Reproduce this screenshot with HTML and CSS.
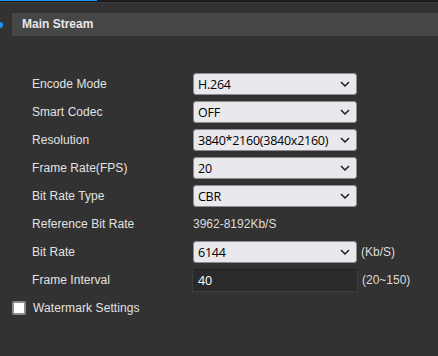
FILE: index.html
```html
<!DOCTYPE html>
<html>
<head>
<meta charset="utf-8">
<link rel="stylesheet" href="styles.css">
</head>
<body>
<div class="topbar"><div class="topbar-active"></div></div>
<div class="head-row">
  <span class="dot"></span>
  <div class="section-head">Main Stream</div>
</div>
<div class="form">
  <div class="row">
    <div class="label">Encode Mode</div>
    <div class="select"><span>H.264</span><svg class="chev" width="10" height="6" viewBox="0 0 10 6"><path d="M1 1 L5 5 L9 1" fill="none" stroke="#222" stroke-width="1.5"/></svg></div>
  </div>
  <div class="row">
    <div class="label">Smart Codec</div>
    <div class="select"><span>OFF</span><svg class="chev" width="10" height="6" viewBox="0 0 10 6"><path d="M1 1 L5 5 L9 1" fill="none" stroke="#222" stroke-width="1.5"/></svg></div>
  </div>
  <div class="row">
    <div class="label">Resolution</div>
    <div class="select"><span>3840*2160(3840x2160)</span><svg class="chev" width="10" height="6" viewBox="0 0 10 6"><path d="M1 1 L5 5 L9 1" fill="none" stroke="#222" stroke-width="1.5"/></svg></div>
  </div>
  <div class="row">
    <div class="label">Frame Rate(FPS)</div>
    <div class="select"><span>20</span><svg class="chev" width="10" height="6" viewBox="0 0 10 6"><path d="M1 1 L5 5 L9 1" fill="none" stroke="#222" stroke-width="1.5"/></svg></div>
  </div>
  <div class="row">
    <div class="label">Bit Rate Type</div>
    <div class="select"><span>CBR</span><svg class="chev" width="10" height="6" viewBox="0 0 10 6"><path d="M1 1 L5 5 L9 1" fill="none" stroke="#222" stroke-width="1.5"/></svg></div>
  </div>
  <div class="row">
    <div class="label">Reference Bit Rate</div>
    <div class="value">3962-8192Kb/S</div>
  </div>
  <div class="row">
    <div class="label">Bit Rate</div>
    <div class="select"><span>6144</span><svg class="chev" width="10" height="6" viewBox="0 0 10 6"><path d="M1 1 L5 5 L9 1" fill="none" stroke="#222" stroke-width="1.5"/></svg></div>
    <div class="unit">(Kb/S)</div>
  </div>
  <div class="row">
    <div class="label">Frame Interval</div>
    <div class="input">40</div>
    <div class="unit">(20~150)</div>
  </div>
  <div class="check-row">
    <span class="checkbox"></span>
    <span class="check-label">Watermark Settings</span>
  </div>
</div>
</body>
</html>
```
FILE: styles.css
```css
html, body {
  margin: 0;
  padding: 0;
}
body {
  width: 438px;
  height: 356px;
  background: #323232;
  font-family: "Liberation Sans", Arial, sans-serif;
  font-size: 12px;
  color: #e2e2e2;
  overflow: hidden;
}
.topbar {
  height: 2px;
  background: #1c1c1c;
  border-bottom: 1px solid #3a3a3a;
}
.topbar-active {
  width: 97px;
  height: 1px;
  background: #1e8fff;
}
.head-row {
  display: flex;
  align-items: center;
  margin-top: 10px;
}
.dot {
  width: 3px;
  height: 6px;
  background: #1e8fff;
  border-radius: 0 3px 3px 0;
  margin-right: 9px;
}
.section-head {
  flex: 1;
  height: 23px;
  line-height: 23px;
  background: #464646;
  padding-left: 10px;
  font-weight: bold;
  color: #e8e8e8;
}
.form {
  margin-top: 34px;
  padding-left: 32px;
}
.row {
  display: flex;
  align-items: center;
  height: 28px;
}
.label {
  width: 161px;
  flex: none;
  letter-spacing: 0.05px;
}
.select {
  box-sizing: border-box;
  width: 164px;
  height: 22px;
  background: #e9e9ed;
  border: 1px solid #8a8a8f;
  border-radius: 3px;
  display: flex;
  align-items: center;
  justify-content: space-between;
  padding: 0 6px 0 4px;
  font-family: "Open Sans", "Noto Sans", sans-serif;
  font-size: 12.5px;
  letter-spacing: -0.25px;
  color: #000;
}
.chev {
  display: block;
}
.value {
  color: #dcdcdc;
}
.unit {
  margin-left: 4px;
  color: #dcdcdc;
}
.input {
  box-sizing: border-box;
  width: 166px;
  height: 23px;
  margin-left: -1px;
  background: #2a2a2a;
  border: 1px solid #3e3e3e;
  border-top-color: #222;
  display: flex;
  align-items: center;
  padding-left: 5px;
  font-family: "Open Sans", "Noto Sans", sans-serif;
  font-size: 12.5px;
  letter-spacing: -0.25px;
  color: #fff;
}
.check-row {
  display: flex;
  align-items: center;
  height: 28px;
  margin-left: -20px;
}
.checkbox {
  box-sizing: border-box;
  width: 14px;
  height: 14px;
  background: #fff;
  border: 2px solid #8a8a90;
  border-radius: 2px;
  margin-right: 7px;
}
.check-label {
  color: #e2e2e2;
  letter-spacing: 0.1px;
}
```
